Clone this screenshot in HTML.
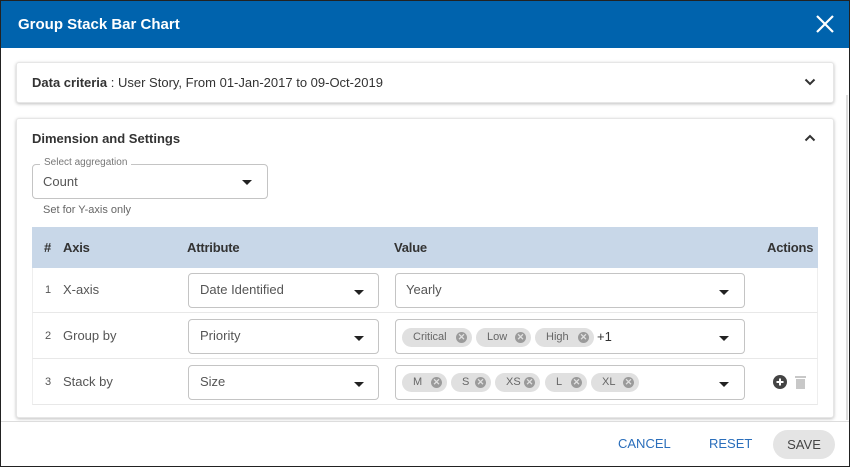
<!DOCTYPE html>
<html><head><meta charset="utf-8"><style>
*{box-sizing:border-box;margin:0;padding:0}
body{width:850px;height:467px;overflow:hidden;background:#fff;font-family:"Liberation Sans",sans-serif;color:#333;position:relative;font-size:13px}
.a{position:absolute}
.frame{left:0;top:0;width:850px;height:467px;border:1px solid #222;}
.hdr{left:0;top:0;width:850px;height:48px;background:#0063ad;color:#fff;font-weight:bold;font-size:15px;padding:16px 0 0 18px}
.card{background:#fff;border:1px solid #e6e6e6;border-radius:3px;box-shadow:0 1px 3px rgba(0,0,0,.25)}
.sel{border:1px solid #c4c4c4;border-radius:4px;background:#fff;color:#555;font-size:13px}
.caret{position:absolute;width:0;height:0;border-left:5px solid transparent;border-right:5px solid transparent;border-top:5px solid #222}
.th{font-weight:bold;font-size:13px;color:#333;letter-spacing:-0.2px}
.row{left:32px;width:786px;border-bottom:1px solid #e8e8e8}
.chip{position:absolute;top:0;height:19px;border-radius:10px;background:#e0e0e0;color:#666;font-size:11px;line-height:19px;padding-left:11px}
.chip i{position:absolute;right:5px;top:4px;width:11px;height:11px;border-radius:50%;background:#9a9a9a;color:#e0e0e0;font-style:normal;font-size:9px;line-height:11px;text-align:center;font-weight:bold}
.btn{color:#2a6ebb;font-size:13px}
</style></head><body>
<div class="a hdr">Group Stack Bar Chart</div>
<svg class="a" style="left:815px;top:14px" width="20" height="20"><path d="M2 2L18 18M18 2L2 18" stroke="#fff" stroke-width="2.2"/></svg>

<div class="a card" style="left:16px;top:62px;width:818px;height:41px"></div>
<div class="a" style="left:32px;top:75px;font-size:13px"><b>Data criteria</b> : User Story, From 01-Jan-2017 to 09-Oct-2019</div>
<svg class="a" style="left:804px;top:78px" width="12" height="8"><path d="M1.5 1.5L6 6L10.5 1.5" stroke="#333" stroke-width="2" fill="none"/></svg>

<div class="a card" style="left:16px;top:118px;width:818px;height:300px"></div>
<div class="a" style="left:32px;top:131px;font-weight:bold;font-size:13px">Dimension and Settings</div>
<svg class="a" style="left:804px;top:134px" width="12" height="8"><path d="M1.5 6.5L6 2L10.5 6.5" stroke="#333" stroke-width="2" fill="none"/></svg>

<div class="a sel" style="left:32px;top:164px;width:236px;height:35px"></div>
<div class="a" style="left:40px;top:157px;background:#fff;padding:0 4px;font-size:10px;color:#777">Select aggregation</div>
<div class="a" style="left:43px;top:174px;color:#555">Count</div>
<div class="caret" style="left:242px;top:180px"></div>
<div class="a" style="left:43px;top:204px;font-size:11px;color:#666">Set for Y-axis only</div>

<div class="a" style="left:32px;top:227px;width:786px;height:41px;background:#c8d7e8"></div>
<div class="a th" style="left:44px;top:240px">#</div>
<div class="a th" style="left:63px;top:240px">Axis</div>
<div class="a th" style="left:187px;top:240px">Attribute</div>
<div class="a th" style="left:394px;top:240px">Value</div>
<div class="a th" style="left:767px;top:240px">Actions</div>

<div class="a row" style="top:268px;height:45px;border-left:1px solid #eee;border-right:1px solid #eee"></div>
<div class="a row" style="top:313px;height:46px;border-left:1px solid #eee;border-right:1px solid #eee"></div>
<div class="a row" style="top:359px;height:46px;border-left:1px solid #eee;border-right:1px solid #eee"></div>

<div class="a" style="left:45px;top:284px;font-size:11px;color:#555">1</div>
<div class="a" style="left:63px;top:282px;color:#555">X-axis</div>
<div class="a" style="left:45px;top:330px;font-size:11px;color:#555">2</div>
<div class="a" style="left:63px;top:328px;color:#555">Group by</div>
<div class="a" style="left:45px;top:376px;font-size:11px;color:#555">3</div>
<div class="a" style="left:63px;top:374px;color:#555">Stack by</div>

<div class="a sel" style="left:188px;top:273px;width:191px;height:35px"></div>
<div class="a" style="left:200px;top:282px;color:#555">Date Identified</div>
<div class="caret" style="left:354px;top:290px"></div>
<div class="a sel" style="left:188px;top:319px;width:191px;height:35px"></div>
<div class="a" style="left:200px;top:328px;color:#555">Priority</div>
<div class="caret" style="left:354px;top:336px"></div>
<div class="a sel" style="left:188px;top:365px;width:191px;height:35px"></div>
<div class="a" style="left:200px;top:374px;color:#555">Size</div>
<div class="caret" style="left:354px;top:382px"></div>

<div class="a sel" style="left:395px;top:273px;width:350px;height:35px"></div>
<div class="a" style="left:406px;top:282px;color:#555">Yearly</div>
<div class="caret" style="left:719px;top:290px"></div>
<div class="a sel" style="left:395px;top:319px;width:350px;height:35px"></div>
<div class="caret" style="left:719px;top:336px"></div>
<div class="a" style="left:0;top:328px;width:850px;height:19px">
<div class="chip" style="left:402px;width:70px">Critical<i>✕</i></div>
<div class="chip" style="left:476px;width:55px">Low<i>✕</i></div>
<div class="chip" style="left:535px;width:59px">High<i>✕</i></div>
<div class="a" style="left:597px;top:1px;font-size:13px;color:#333">+1</div>
</div>
<div class="a sel" style="left:395px;top:365px;width:350px;height:35px"></div>
<div class="caret" style="left:719px;top:382px"></div>
<div class="a" style="left:0;top:373px;width:850px;height:19px">
<div class="chip" style="left:402px;width:45px">M<i>✕</i></div>
<div class="chip" style="left:451px;width:40px">S<i>✕</i></div>
<div class="chip" style="left:495px;width:45px">XS<i>✕</i></div>
<div class="chip" style="left:545px;width:42px">L<i>✕</i></div>
<div class="chip" style="left:591px;width:48px">XL<i>✕</i></div>
</div>
<svg class="a" style="left:773px;top:375px" width="14" height="14"><circle cx="7" cy="7" r="7" fill="#444"/><path d="M7 3.5V10.5M3.5 7H10.5" stroke="#fff" stroke-width="2"/></svg>
<svg class="a" style="left:795px;top:375px" width="11" height="14"><rect x="0" y="1" width="11" height="2" fill="#c8c8c8"/><rect x="1" y="4" width="9" height="10" fill="#c8c8c8"/></svg>

<div class="a" style="left:1px;top:421px;width:848px;height:1px;background:#ddd"></div>
<div class="a btn" style="left:618px;top:436px">CANCEL</div>
<div class="a btn" style="left:709px;top:436px">RESET</div>
<div class="a" style="left:773px;top:430px;width:62px;height:29px;border-radius:15px;background:#e4e4e4;color:#444;text-align:center;line-height:29px;font-size:13px">SAVE</div>
<div class="a" style="left:846px;top:95px;width:2px;height:325px;background:#ddd"></div>
<div class="a frame"></div>
</body></html>
